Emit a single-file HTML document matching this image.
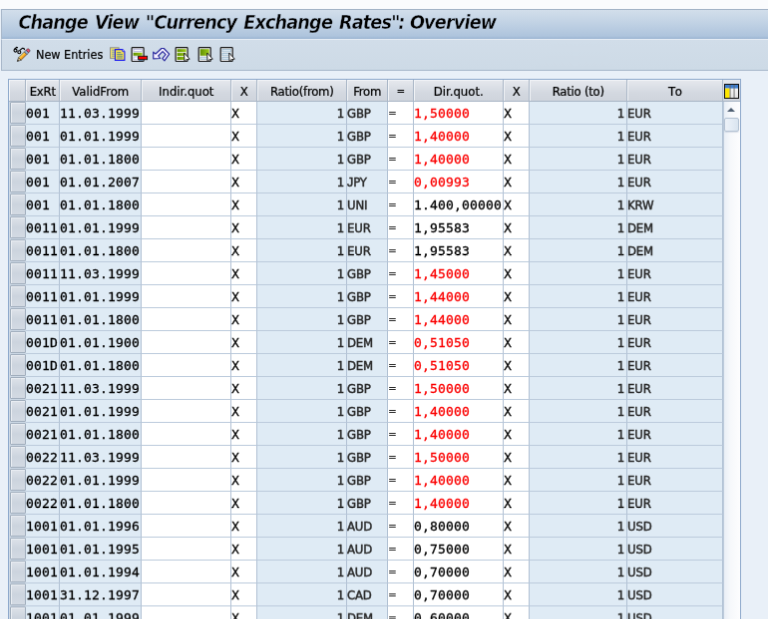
<!DOCTYPE html>
<html lang="en"><head><meta charset="utf-8"><title>Change View "Currency Exchange Rates": Overview</title>
<style>
html,body{margin:0;padding:0;background:#e9f0f8;overflow:hidden}
body{font-stretch:condensed;width:768px;height:619px;position:relative;font-family:"DejaVu Sans","Liberation Sans",sans-serif}
#root{position:absolute;left:0;top:0;width:770px;height:622px;transform:scale(.9974);transform-origin:0 0;will-change:transform;overflow:hidden;background:#e9f0f8}
.topstrip{position:absolute;left:0;top:0;width:770px;height:9px;background:#fafbfd}
.titlebar{position:absolute;left:1px;top:9px;width:769px;height:30px;box-sizing:border-box;border-top:1px solid #a3b3c6;border-left:1px solid #a9b8ca;background:linear-gradient(#d2deeb,#c1d2e4 45%,#aec4dd 90%,#9cb5d2)}
.titlebar h1{margin:0;position:absolute;left:16.4px;top:1.4px;font:italic bold 19.6px/24px "DejaVu Sans Condensed","DejaVu Sans",sans-serif;color:#000;white-space:nowrap;letter-spacing:-.82px;word-spacing:1.6px;-webkit-text-stroke:.4px #bccee3}
.toolbar{position:absolute;left:1px;top:39px;width:769px;height:32px;box-sizing:border-box;border-top:1px solid #e6edf5;border-left:1px solid #a9b8ca;border-bottom:1px solid #a8b8cb;background:linear-gradient(#d1dde9,#cddae6)}
.toolbar .lbl{position:absolute;left:34px;top:7px;font-family:"DejaVu Sans Condensed","DejaVu Sans",sans-serif;font-size:12.5px;letter-spacing:0;line-height:16px;color:#000;-webkit-text-stroke:.22px #000;white-space:nowrap}
.tbicons{position:absolute;left:0;top:40px}
.grid{position:absolute;left:8px;top:79px;width:735px;height:560px;box-sizing:border-box;border:1px solid #8ea9cc;border-bottom:none;background:#dfebf5}
.hrow{position:absolute;left:0;top:0;width:733px;height:22px;background:linear-gradient(#e6e9ee,#d3d8e0 60%,#cfd4dc)}
.hc{position:absolute;top:0;height:22px;box-sizing:border-box;border-right:1px solid #a9b6c6;border-bottom:1px solid #a9b6c6;box-shadow:inset 1px 1px 0 #f2f4f7;text-align:center;font-family:"DejaVu Sans Condensed","DejaVu Sans",sans-serif;font-size:13px;letter-spacing:-.25px;line-height:24.5px;padding-left:.5px;color:#000;-webkit-text-stroke:.22px #000;white-space:nowrap;overflow:hidden}
.cfg{position:absolute;left:716px;top:0;width:17px;height:22px;box-sizing:border-box;border-bottom:1px solid #a9b6c6}
.cfg svg{position:absolute;left:1px;top:4px}
.row{position:absolute;left:0;width:716px;height:23px}
.c{position:absolute;top:0;height:23px;box-sizing:border-box;border-right:1px solid #b0c0d3;border-bottom:1px solid #bccbdc;background:#dfebf5;font-family:"DejaVu Sans Condensed","DejaVu Sans",sans-serif;font-size:13px;letter-spacing:-.15px;line-height:23.6px;color:#2a2a2a;-webkit-text-stroke:.45px #2a2a2a;white-space:nowrap;overflow:hidden}
.c-exrt,.c-vfrom,.c-indir,.c-dir{font-family:"DejaVu Sans Mono","Liberation Mono",monospace;font-size:13px;color:#000;padding-left:0;letter-spacing:.174px;line-height:24px;-webkit-text-stroke:.28px #000}
.c-indir,.c-x1,.c-eq,.c-dir,.c-x2{background:#fff}
.c-x1,.c-x2{color:#000;-webkit-text-stroke:.3px #000}
.c .j{font-family:"Liberation Sans",sans-serif;font-size:12.4px;letter-spacing:0}
.c-rfrom,.c-rto{text-align:right;padding-right:2px}
.c-from,.c-to{padding-left:0}
.c-sel{background:#cdd9e6;border-right:none;border-bottom:none}
.btn{position:absolute;left:1px;top:.2px;width:16px;height:21.4px;box-sizing:border-box;border:1px solid #a0adbc;border-radius:1px;background:linear-gradient(#dde2e9,#ccd4de 50%,#d3dae3);box-shadow:inset 1px 1px 0 #e9edf2}
.c.red{color:#fb0000;-webkit-text-stroke:.28px #fb0000}
.vscroll{position:absolute;left:716px;top:22px;width:17px;height:540px;background:linear-gradient(90deg,#e9eff6,#f6f8fb 40%,#fdfdfe);border-left:1px solid #bccbdc;box-sizing:border-box}
.uparrow{position:absolute;left:3.2px;top:5.6px;width:0;height:0;border-left:4.5px solid transparent;border-right:4.5px solid transparent;border-bottom:4.5px solid #4f5f72}
.thumb{position:absolute;left:0;top:16.3px;width:15px;height:13.6px;box-sizing:border-box;border:1px solid #b4c2d3;border-radius:2px;background:linear-gradient(90deg,#edf2f8,#e4ecf5 50%,#d9e4ef);box-shadow:0 1px 1px rgba(120,140,170,.25)}
.h-vfrom,.h-indir,.h-dir{letter-spacing:0}
.hc.h-to{letter-spacing:1.6px;padding-left:2.5px}
.titlebar h1 .q{letter-spacing:-2.2px}
.c.c-eq{font-size:11px;-webkit-text-stroke:.3px #2d2d2d;padding-left:.3px}
.hc.h-eq{font-size:11px;-webkit-text-stroke:.3px #000}

</style></head>
<body>
<div id="root">
<div class="topstrip"></div>
<div class="titlebar"><h1>Change View "Currency Exchange Rates<span class="q">":</span> Overview</h1></div>
<div class="toolbar"><span class="lbl">New Entries</span></div>
<svg class="tbicons" width="260" height="30" viewBox="0 40 260 30">
<defs>
<linearGradient id="gr" x1="0" y1="0" x2="1" y2="0"><stop offset="0" stop-color="#5f8f00"/><stop offset="1" stop-color="#9ccb1a"/></linearGradient>
<linearGradient id="pb" x1="0" y1="0" x2="0" y2="1"><stop offset="0" stop-color="#ffe36a"/><stop offset=".5" stop-color="#ffb52e"/><stop offset="1" stop-color="#e88a10"/></linearGradient>
</defs>
<!-- display/change pencil -->
<g fill="none" stroke="#000" stroke-width="1.1">
<circle cx="15.5" cy="50.6" r="1.5"/><circle cx="19.3" cy="52.3" r="1.5"/>
<path d="M14.4 49.4 L16.6 47.4 L18 47.8"/><path d="M19.6 50.6 L22.4 48.3 L24 48.6 L24.6 50"/>
</g>
<g transform="translate(17.3,61.5) rotate(-44.5)">
<path d="M0 0 L3.6 -1.8 L3.6 1.8 Z" fill="#f3d9a0" stroke="#222" stroke-width=".6"/>
<path d="M0 0 L1.6 -.8 L1.6 .8 Z" fill="#111"/>
<rect x="3.6" y="-1.8" width="8.2" height="3.6" fill="url(#pb)" stroke="#222" stroke-width=".5"/>
<rect x="11.8" y="-1.8" width="2.4" height="3.6" fill="#9db3d9" stroke="#222" stroke-width=".5"/>
<path d="M14.2 -1.8 H15.6 A1.4 1.8 0 0 1 15.6 1.8 H14.2 Z" fill="#ea4f6c" stroke="#222" stroke-width=".5"/>
</g>
<!-- copy as -->
<g>
<rect x="110.5" y="47.8" width="8.6" height="10.6" fill="#f4e46a" stroke="#8c8c8c" stroke-width="1"/>
<path d="M112 50.2h4M112 52.2h4M112 54.2h4M112 56.2h4" stroke="#6f8fb0" stroke-width=".9"/>
<path d="M115.4 49.6 H122.8 L124.9 51.7 V60.4 H115.4 Z" fill="#f7e24e" stroke="#1a1aee" stroke-width="1.1"/>
<path d="M122.8 49.6 V51.7 H124.9" fill="#fff" stroke="#1a1aee" stroke-width=".9"/>
<path d="M117.2 52.6h4M117.2 54.4h5.8M117.2 56.2h5.8M117.2 58h5.8" stroke="#4f7f8f" stroke-width=".9"/>
</g>
<!-- delete -->
<g>
<rect x="132.1" y="47.7" width="12" height="13.8" rx=".8" fill="#f2f2f8" stroke="#1a1a1a" stroke-width="1.2"/>
<rect x="134" y="49.4" width="8.2" height="2.2" fill="#fff" stroke="#a9a9d6" stroke-width=".7"/>
<rect x="133.6" y="52.8" width="9" height="3" fill="url(#gr)"/>
<rect x="134" y="57" width="5" height="2.8" fill="#fff" stroke="#a9a9d6" stroke-width=".7"/>
<rect x="139" y="59" width="4.4" height="1.8" fill="#4f80a8"/>
<rect x="138.6" y="56.3" width="9" height="3.4" fill="#f00" stroke="#111" stroke-width=".9"/>
</g>
<!-- undo -->
<g>
<path d="M153.7 52.2 L156 54 L161.9 48.5 L164.3 48.5 L169.7 54.2 L164.9 60.8 L162.8 58.6 L166.1 54.7 L163.1 51.6 L158.7 56 L160.6 58.5 L153.7 58.8 Z" fill="#f6efff" stroke="#2a2a9e" stroke-width="1.2" stroke-linejoin="round"/>
</g>
<!-- select all -->
<g>
<rect x="176.1" y="47.7" width="12" height="13.8" rx=".8" fill="#f4f4f4" stroke="#1a1a1a" stroke-width="1.2"/>
<rect x="177.6" y="49.2" width="9" height="3" fill="url(#gr)"/><rect x="177.6" y="53.1" width="9" height="3" fill="url(#gr)"/><rect x="177.6" y="57" width="9" height="3" fill="url(#gr)"/>
<path d="M184.6 53 L184.9 61.6 L186.8 59.8 L190.2 59.2 Z" fill="#fff" stroke="#111" stroke-width=".9" stroke-linejoin="round"/>
</g>
<!-- select block -->
<g>
<rect x="199.2" y="47.7" width="12" height="13.8" rx=".8" fill="#f4f4f4" stroke="#1a1a1a" stroke-width="1.2"/>
<rect x="200.7" y="49.2" width="9" height="6.6" fill="url(#gr)"/>
<rect x="200.9" y="57.2" width="8.6" height="2.4" fill="#dbe8f2" stroke="#8fb0c6" stroke-width=".7"/>
<path d="M207.7 53 L208.0 61.6 L209.9 59.8 L213.3 59.2 Z" fill="#fff" stroke="#111" stroke-width=".9" stroke-linejoin="round"/>
</g>
<!-- deselect all -->
<g>
<rect x="221.2" y="47.7" width="12" height="13.8" rx=".8" fill="#f4f4f4" stroke="#1a1a1a" stroke-width="1.2"/>
<rect x="222.9" y="49.5" width="8.6" height="2.4" fill="#dbe8f2" stroke="#8fb0c6" stroke-width=".7"/><rect x="222.9" y="53.4" width="8.6" height="2.4" fill="#dbe8f2" stroke="#8fb0c6" stroke-width=".7"/><rect x="222.9" y="57.3" width="8.6" height="2.4" fill="#dbe8f2" stroke="#8fb0c6" stroke-width=".7"/>
<path d="M229.7 53 L230.0 61.6 L231.9 59.8 L235.3 59.2 Z" fill="#fff" stroke="#111" stroke-width=".9" stroke-linejoin="round"/>
</g>
</svg>
<div class="grid">
<div class="hrow"><div class="hc h-sel" style="left:0px;width:17px"></div><div class="hc h-exrt" style="left:17px;width:34px">ExRt</div><div class="hc h-vfrom" style="left:51px;width:82px">ValidFrom</div><div class="hc h-indir" style="left:133px;width:90px">Indir.quot</div><div class="hc h-x1" style="left:223px;width:26px">X</div><div class="hc h-rfrom" style="left:249px;width:90px">Ratio(from)</div><div class="hc h-from" style="left:339px;width:41px">From</div><div class="hc h-eq" style="left:380px;width:26px">=</div><div class="hc h-dir" style="left:406px;width:90px">Dir.quot.</div><div class="hc h-x2" style="left:496px;width:26px">X</div><div class="hc h-rto" style="left:522px;width:98px">Ratio (to)</div><div class="hc h-to" style="left:620px;width:96px">To</div><div class="cfg"><svg width="15" height="15" viewBox="0 0 15 15"><defs><linearGradient id="cw" x1="0" y1="0" x2="0" y2="1"><stop offset="0" stop-color="#fff"/><stop offset="1" stop-color="#e2e2e2"/></linearGradient></defs><rect x="0.5" y="0.5" width="14" height="14" fill="url(#cw)" stroke="#111"/><rect x="1" y="1" width="13" height="3.6" fill="#3f7fd0"/><rect x="1" y="4.6" width="4.6" height="9.4" fill="#ffe600"/><rect x="5.6" y="1" width=".9" height="13" fill="#666"/><rect x="9.6" y="1" width=".9" height="13" fill="#666"/></svg>
</div></div>
<div class="row" style="top:22px"><div class="c c-sel" style="left:0px;width:17px"><span class="btn"></span></div><div class="c c-exrt" style="left:17px;width:34px">001</div><div class="c c-vfrom" style="left:51px;width:82px">11.03.1999</div><div class="c c-indir" style="left:133px;width:90px"></div><div class="c c-x1" style="left:223px;width:26px">X</div><div class="c c-rfrom" style="left:249px;width:90px">1</div><div class="c c-from" style="left:339px;width:41px">GBP</div><div class="c c-eq" style="left:380px;width:26px">=</div><div class="c c-dir red" style="left:406px;width:90px">1,50000</div><div class="c c-x2" style="left:496px;width:26px">X</div><div class="c c-rto" style="left:522px;width:98px">1</div><div class="c c-to" style="left:620px;width:96px">EUR</div></div>
<div class="row" style="top:45px"><div class="c c-sel" style="left:0px;width:17px"><span class="btn"></span></div><div class="c c-exrt" style="left:17px;width:34px">001</div><div class="c c-vfrom" style="left:51px;width:82px">01.01.1999</div><div class="c c-indir" style="left:133px;width:90px"></div><div class="c c-x1" style="left:223px;width:26px">X</div><div class="c c-rfrom" style="left:249px;width:90px">1</div><div class="c c-from" style="left:339px;width:41px">GBP</div><div class="c c-eq" style="left:380px;width:26px">=</div><div class="c c-dir red" style="left:406px;width:90px">1,40000</div><div class="c c-x2" style="left:496px;width:26px">X</div><div class="c c-rto" style="left:522px;width:98px">1</div><div class="c c-to" style="left:620px;width:96px">EUR</div></div>
<div class="row" style="top:68px"><div class="c c-sel" style="left:0px;width:17px"><span class="btn"></span></div><div class="c c-exrt" style="left:17px;width:34px">001</div><div class="c c-vfrom" style="left:51px;width:82px">01.01.1800</div><div class="c c-indir" style="left:133px;width:90px"></div><div class="c c-x1" style="left:223px;width:26px">X</div><div class="c c-rfrom" style="left:249px;width:90px">1</div><div class="c c-from" style="left:339px;width:41px">GBP</div><div class="c c-eq" style="left:380px;width:26px">=</div><div class="c c-dir red" style="left:406px;width:90px">1,40000</div><div class="c c-x2" style="left:496px;width:26px">X</div><div class="c c-rto" style="left:522px;width:98px">1</div><div class="c c-to" style="left:620px;width:96px">EUR</div></div>
<div class="row" style="top:91px"><div class="c c-sel" style="left:0px;width:17px"><span class="btn"></span></div><div class="c c-exrt" style="left:17px;width:34px">001</div><div class="c c-vfrom" style="left:51px;width:82px">01.01.2007</div><div class="c c-indir" style="left:133px;width:90px"></div><div class="c c-x1" style="left:223px;width:26px">X</div><div class="c c-rfrom" style="left:249px;width:90px">1</div><div class="c c-from" style="left:339px;width:41px"><span class="j">J</span>PY</div><div class="c c-eq" style="left:380px;width:26px">=</div><div class="c c-dir red" style="left:406px;width:90px">0,00993</div><div class="c c-x2" style="left:496px;width:26px">X</div><div class="c c-rto" style="left:522px;width:98px">1</div><div class="c c-to" style="left:620px;width:96px">EUR</div></div>
<div class="row" style="top:114px"><div class="c c-sel" style="left:0px;width:17px"><span class="btn"></span></div><div class="c c-exrt" style="left:17px;width:34px">001</div><div class="c c-vfrom" style="left:51px;width:82px">01.01.1800</div><div class="c c-indir" style="left:133px;width:90px"></div><div class="c c-x1" style="left:223px;width:26px">X</div><div class="c c-rfrom" style="left:249px;width:90px">1</div><div class="c c-from" style="left:339px;width:41px">UNI</div><div class="c c-eq" style="left:380px;width:26px">=</div><div class="c c-dir" style="left:406px;width:90px">1.400,00000</div><div class="c c-x2" style="left:496px;width:26px">X</div><div class="c c-rto" style="left:522px;width:98px">1</div><div class="c c-to" style="left:620px;width:96px">KRW</div></div>
<div class="row" style="top:137px"><div class="c c-sel" style="left:0px;width:17px"><span class="btn"></span></div><div class="c c-exrt" style="left:17px;width:34px">0011</div><div class="c c-vfrom" style="left:51px;width:82px">01.01.1999</div><div class="c c-indir" style="left:133px;width:90px"></div><div class="c c-x1" style="left:223px;width:26px">X</div><div class="c c-rfrom" style="left:249px;width:90px">1</div><div class="c c-from" style="left:339px;width:41px">EUR</div><div class="c c-eq" style="left:380px;width:26px">=</div><div class="c c-dir" style="left:406px;width:90px">1,95583</div><div class="c c-x2" style="left:496px;width:26px">X</div><div class="c c-rto" style="left:522px;width:98px">1</div><div class="c c-to" style="left:620px;width:96px">DEM</div></div>
<div class="row" style="top:160px"><div class="c c-sel" style="left:0px;width:17px"><span class="btn"></span></div><div class="c c-exrt" style="left:17px;width:34px">0011</div><div class="c c-vfrom" style="left:51px;width:82px">01.01.1800</div><div class="c c-indir" style="left:133px;width:90px"></div><div class="c c-x1" style="left:223px;width:26px">X</div><div class="c c-rfrom" style="left:249px;width:90px">1</div><div class="c c-from" style="left:339px;width:41px">EUR</div><div class="c c-eq" style="left:380px;width:26px">=</div><div class="c c-dir" style="left:406px;width:90px">1,95583</div><div class="c c-x2" style="left:496px;width:26px">X</div><div class="c c-rto" style="left:522px;width:98px">1</div><div class="c c-to" style="left:620px;width:96px">DEM</div></div>
<div class="row" style="top:183px"><div class="c c-sel" style="left:0px;width:17px"><span class="btn"></span></div><div class="c c-exrt" style="left:17px;width:34px">0011</div><div class="c c-vfrom" style="left:51px;width:82px">11.03.1999</div><div class="c c-indir" style="left:133px;width:90px"></div><div class="c c-x1" style="left:223px;width:26px">X</div><div class="c c-rfrom" style="left:249px;width:90px">1</div><div class="c c-from" style="left:339px;width:41px">GBP</div><div class="c c-eq" style="left:380px;width:26px">=</div><div class="c c-dir red" style="left:406px;width:90px">1,45000</div><div class="c c-x2" style="left:496px;width:26px">X</div><div class="c c-rto" style="left:522px;width:98px">1</div><div class="c c-to" style="left:620px;width:96px">EUR</div></div>
<div class="row" style="top:206px"><div class="c c-sel" style="left:0px;width:17px"><span class="btn"></span></div><div class="c c-exrt" style="left:17px;width:34px">0011</div><div class="c c-vfrom" style="left:51px;width:82px">01.01.1999</div><div class="c c-indir" style="left:133px;width:90px"></div><div class="c c-x1" style="left:223px;width:26px">X</div><div class="c c-rfrom" style="left:249px;width:90px">1</div><div class="c c-from" style="left:339px;width:41px">GBP</div><div class="c c-eq" style="left:380px;width:26px">=</div><div class="c c-dir red" style="left:406px;width:90px">1,44000</div><div class="c c-x2" style="left:496px;width:26px">X</div><div class="c c-rto" style="left:522px;width:98px">1</div><div class="c c-to" style="left:620px;width:96px">EUR</div></div>
<div class="row" style="top:229px"><div class="c c-sel" style="left:0px;width:17px"><span class="btn"></span></div><div class="c c-exrt" style="left:17px;width:34px">0011</div><div class="c c-vfrom" style="left:51px;width:82px">01.01.1800</div><div class="c c-indir" style="left:133px;width:90px"></div><div class="c c-x1" style="left:223px;width:26px">X</div><div class="c c-rfrom" style="left:249px;width:90px">1</div><div class="c c-from" style="left:339px;width:41px">GBP</div><div class="c c-eq" style="left:380px;width:26px">=</div><div class="c c-dir red" style="left:406px;width:90px">1,44000</div><div class="c c-x2" style="left:496px;width:26px">X</div><div class="c c-rto" style="left:522px;width:98px">1</div><div class="c c-to" style="left:620px;width:96px">EUR</div></div>
<div class="row" style="top:252px"><div class="c c-sel" style="left:0px;width:17px"><span class="btn"></span></div><div class="c c-exrt" style="left:17px;width:34px">001D</div><div class="c c-vfrom" style="left:51px;width:82px">01.01.1900</div><div class="c c-indir" style="left:133px;width:90px"></div><div class="c c-x1" style="left:223px;width:26px">X</div><div class="c c-rfrom" style="left:249px;width:90px">1</div><div class="c c-from" style="left:339px;width:41px">DEM</div><div class="c c-eq" style="left:380px;width:26px">=</div><div class="c c-dir red" style="left:406px;width:90px">0,51050</div><div class="c c-x2" style="left:496px;width:26px">X</div><div class="c c-rto" style="left:522px;width:98px">1</div><div class="c c-to" style="left:620px;width:96px">EUR</div></div>
<div class="row" style="top:275px"><div class="c c-sel" style="left:0px;width:17px"><span class="btn"></span></div><div class="c c-exrt" style="left:17px;width:34px">001D</div><div class="c c-vfrom" style="left:51px;width:82px">01.01.1800</div><div class="c c-indir" style="left:133px;width:90px"></div><div class="c c-x1" style="left:223px;width:26px">X</div><div class="c c-rfrom" style="left:249px;width:90px">1</div><div class="c c-from" style="left:339px;width:41px">DEM</div><div class="c c-eq" style="left:380px;width:26px">=</div><div class="c c-dir red" style="left:406px;width:90px">0,51050</div><div class="c c-x2" style="left:496px;width:26px">X</div><div class="c c-rto" style="left:522px;width:98px">1</div><div class="c c-to" style="left:620px;width:96px">EUR</div></div>
<div class="row" style="top:298px"><div class="c c-sel" style="left:0px;width:17px"><span class="btn"></span></div><div class="c c-exrt" style="left:17px;width:34px">0021</div><div class="c c-vfrom" style="left:51px;width:82px">11.03.1999</div><div class="c c-indir" style="left:133px;width:90px"></div><div class="c c-x1" style="left:223px;width:26px">X</div><div class="c c-rfrom" style="left:249px;width:90px">1</div><div class="c c-from" style="left:339px;width:41px">GBP</div><div class="c c-eq" style="left:380px;width:26px">=</div><div class="c c-dir red" style="left:406px;width:90px">1,50000</div><div class="c c-x2" style="left:496px;width:26px">X</div><div class="c c-rto" style="left:522px;width:98px">1</div><div class="c c-to" style="left:620px;width:96px">EUR</div></div>
<div class="row" style="top:321px"><div class="c c-sel" style="left:0px;width:17px"><span class="btn"></span></div><div class="c c-exrt" style="left:17px;width:34px">0021</div><div class="c c-vfrom" style="left:51px;width:82px">01.01.1999</div><div class="c c-indir" style="left:133px;width:90px"></div><div class="c c-x1" style="left:223px;width:26px">X</div><div class="c c-rfrom" style="left:249px;width:90px">1</div><div class="c c-from" style="left:339px;width:41px">GBP</div><div class="c c-eq" style="left:380px;width:26px">=</div><div class="c c-dir red" style="left:406px;width:90px">1,40000</div><div class="c c-x2" style="left:496px;width:26px">X</div><div class="c c-rto" style="left:522px;width:98px">1</div><div class="c c-to" style="left:620px;width:96px">EUR</div></div>
<div class="row" style="top:344px"><div class="c c-sel" style="left:0px;width:17px"><span class="btn"></span></div><div class="c c-exrt" style="left:17px;width:34px">0021</div><div class="c c-vfrom" style="left:51px;width:82px">01.01.1800</div><div class="c c-indir" style="left:133px;width:90px"></div><div class="c c-x1" style="left:223px;width:26px">X</div><div class="c c-rfrom" style="left:249px;width:90px">1</div><div class="c c-from" style="left:339px;width:41px">GBP</div><div class="c c-eq" style="left:380px;width:26px">=</div><div class="c c-dir red" style="left:406px;width:90px">1,40000</div><div class="c c-x2" style="left:496px;width:26px">X</div><div class="c c-rto" style="left:522px;width:98px">1</div><div class="c c-to" style="left:620px;width:96px">EUR</div></div>
<div class="row" style="top:367px"><div class="c c-sel" style="left:0px;width:17px"><span class="btn"></span></div><div class="c c-exrt" style="left:17px;width:34px">0022</div><div class="c c-vfrom" style="left:51px;width:82px">11.03.1999</div><div class="c c-indir" style="left:133px;width:90px"></div><div class="c c-x1" style="left:223px;width:26px">X</div><div class="c c-rfrom" style="left:249px;width:90px">1</div><div class="c c-from" style="left:339px;width:41px">GBP</div><div class="c c-eq" style="left:380px;width:26px">=</div><div class="c c-dir red" style="left:406px;width:90px">1,50000</div><div class="c c-x2" style="left:496px;width:26px">X</div><div class="c c-rto" style="left:522px;width:98px">1</div><div class="c c-to" style="left:620px;width:96px">EUR</div></div>
<div class="row" style="top:390px"><div class="c c-sel" style="left:0px;width:17px"><span class="btn"></span></div><div class="c c-exrt" style="left:17px;width:34px">0022</div><div class="c c-vfrom" style="left:51px;width:82px">01.01.1999</div><div class="c c-indir" style="left:133px;width:90px"></div><div class="c c-x1" style="left:223px;width:26px">X</div><div class="c c-rfrom" style="left:249px;width:90px">1</div><div class="c c-from" style="left:339px;width:41px">GBP</div><div class="c c-eq" style="left:380px;width:26px">=</div><div class="c c-dir red" style="left:406px;width:90px">1,40000</div><div class="c c-x2" style="left:496px;width:26px">X</div><div class="c c-rto" style="left:522px;width:98px">1</div><div class="c c-to" style="left:620px;width:96px">EUR</div></div>
<div class="row" style="top:413px"><div class="c c-sel" style="left:0px;width:17px"><span class="btn"></span></div><div class="c c-exrt" style="left:17px;width:34px">0022</div><div class="c c-vfrom" style="left:51px;width:82px">01.01.1800</div><div class="c c-indir" style="left:133px;width:90px"></div><div class="c c-x1" style="left:223px;width:26px">X</div><div class="c c-rfrom" style="left:249px;width:90px">1</div><div class="c c-from" style="left:339px;width:41px">GBP</div><div class="c c-eq" style="left:380px;width:26px">=</div><div class="c c-dir red" style="left:406px;width:90px">1,40000</div><div class="c c-x2" style="left:496px;width:26px">X</div><div class="c c-rto" style="left:522px;width:98px">1</div><div class="c c-to" style="left:620px;width:96px">EUR</div></div>
<div class="row" style="top:436px"><div class="c c-sel" style="left:0px;width:17px"><span class="btn"></span></div><div class="c c-exrt" style="left:17px;width:34px">1001</div><div class="c c-vfrom" style="left:51px;width:82px">01.01.1996</div><div class="c c-indir" style="left:133px;width:90px"></div><div class="c c-x1" style="left:223px;width:26px">X</div><div class="c c-rfrom" style="left:249px;width:90px">1</div><div class="c c-from" style="left:339px;width:41px">AUD</div><div class="c c-eq" style="left:380px;width:26px">=</div><div class="c c-dir" style="left:406px;width:90px">0,80000</div><div class="c c-x2" style="left:496px;width:26px">X</div><div class="c c-rto" style="left:522px;width:98px">1</div><div class="c c-to" style="left:620px;width:96px">USD</div></div>
<div class="row" style="top:459px"><div class="c c-sel" style="left:0px;width:17px"><span class="btn"></span></div><div class="c c-exrt" style="left:17px;width:34px">1001</div><div class="c c-vfrom" style="left:51px;width:82px">01.01.1995</div><div class="c c-indir" style="left:133px;width:90px"></div><div class="c c-x1" style="left:223px;width:26px">X</div><div class="c c-rfrom" style="left:249px;width:90px">1</div><div class="c c-from" style="left:339px;width:41px">AUD</div><div class="c c-eq" style="left:380px;width:26px">=</div><div class="c c-dir" style="left:406px;width:90px">0,75000</div><div class="c c-x2" style="left:496px;width:26px">X</div><div class="c c-rto" style="left:522px;width:98px">1</div><div class="c c-to" style="left:620px;width:96px">USD</div></div>
<div class="row" style="top:482px"><div class="c c-sel" style="left:0px;width:17px"><span class="btn"></span></div><div class="c c-exrt" style="left:17px;width:34px">1001</div><div class="c c-vfrom" style="left:51px;width:82px">01.01.1994</div><div class="c c-indir" style="left:133px;width:90px"></div><div class="c c-x1" style="left:223px;width:26px">X</div><div class="c c-rfrom" style="left:249px;width:90px">1</div><div class="c c-from" style="left:339px;width:41px">AUD</div><div class="c c-eq" style="left:380px;width:26px">=</div><div class="c c-dir" style="left:406px;width:90px">0,70000</div><div class="c c-x2" style="left:496px;width:26px">X</div><div class="c c-rto" style="left:522px;width:98px">1</div><div class="c c-to" style="left:620px;width:96px">USD</div></div>
<div class="row" style="top:505px"><div class="c c-sel" style="left:0px;width:17px"><span class="btn"></span></div><div class="c c-exrt" style="left:17px;width:34px">1001</div><div class="c c-vfrom" style="left:51px;width:82px">31.12.1997</div><div class="c c-indir" style="left:133px;width:90px"></div><div class="c c-x1" style="left:223px;width:26px">X</div><div class="c c-rfrom" style="left:249px;width:90px">1</div><div class="c c-from" style="left:339px;width:41px">CAD</div><div class="c c-eq" style="left:380px;width:26px">=</div><div class="c c-dir" style="left:406px;width:90px">0,70000</div><div class="c c-x2" style="left:496px;width:26px">X</div><div class="c c-rto" style="left:522px;width:98px">1</div><div class="c c-to" style="left:620px;width:96px">USD</div></div>
<div class="row" style="top:528px"><div class="c c-sel" style="left:0px;width:17px"><span class="btn"></span></div><div class="c c-exrt" style="left:17px;width:34px">1001</div><div class="c c-vfrom" style="left:51px;width:82px">01.01.1999</div><div class="c c-indir" style="left:133px;width:90px"></div><div class="c c-x1" style="left:223px;width:26px">X</div><div class="c c-rfrom" style="left:249px;width:90px">1</div><div class="c c-from" style="left:339px;width:41px">DEM</div><div class="c c-eq" style="left:380px;width:26px">=</div><div class="c c-dir" style="left:406px;width:90px">0,60000</div><div class="c c-x2" style="left:496px;width:26px">X</div><div class="c c-rto" style="left:522px;width:98px">1</div><div class="c c-to" style="left:620px;width:96px">USD</div></div>
<div class="vscroll"><div class="uparrow"></div><div class="thumb"></div></div>
</div>
</div>
</body></html>
